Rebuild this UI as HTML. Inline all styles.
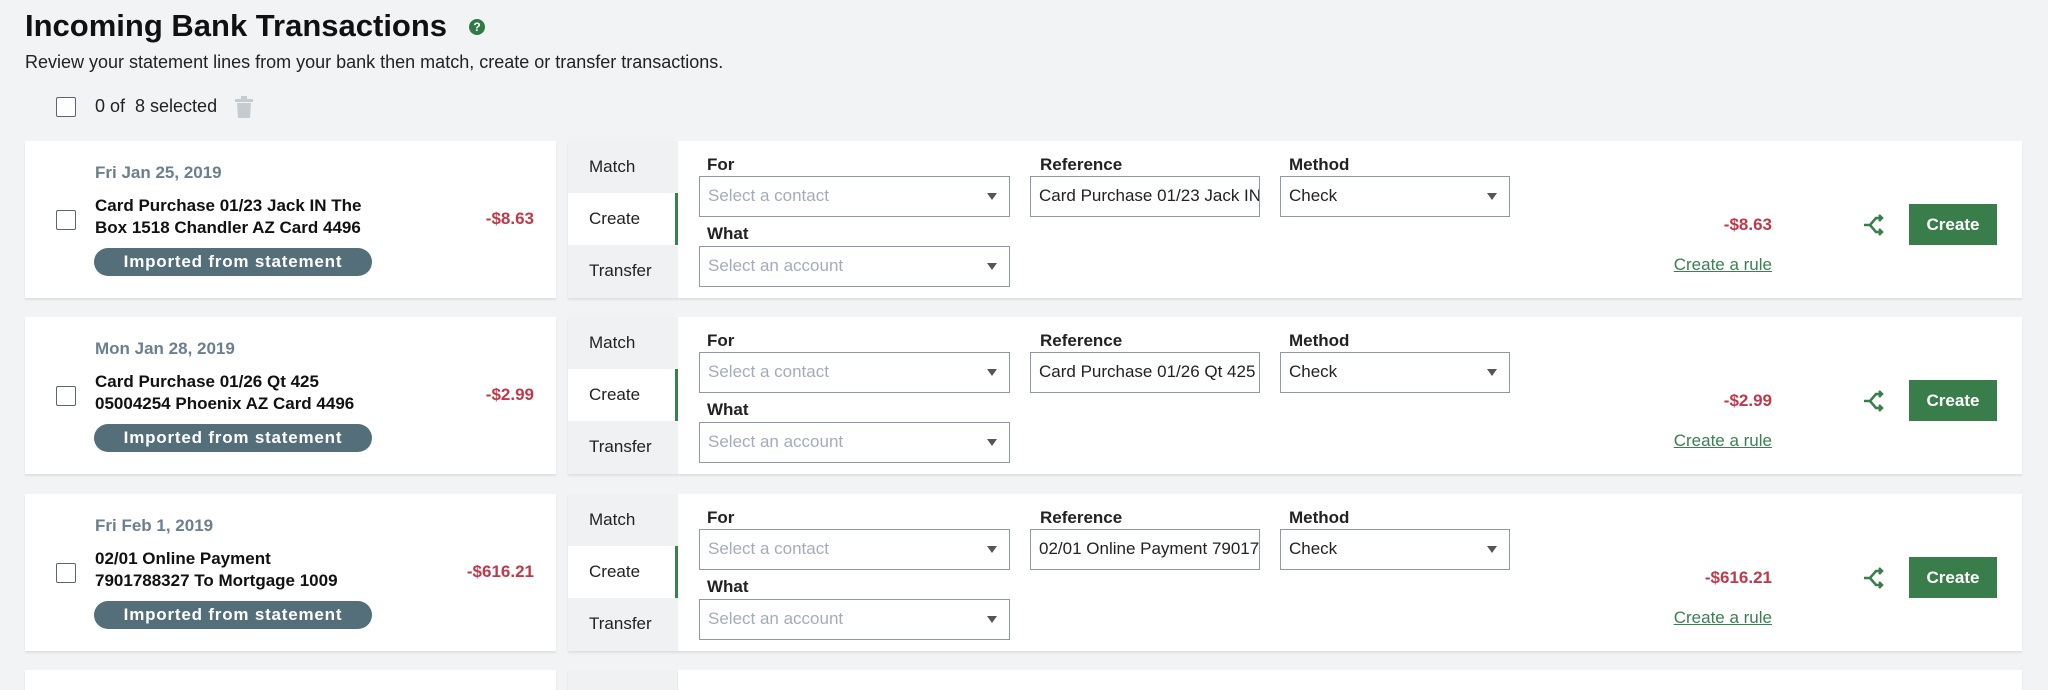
<!DOCTYPE html>
<html><head><style>
*{box-sizing:border-box;margin:0;padding:0}
body{width:2048px;height:677px;overflow:hidden;background:#f2f3f5;font-family:"Liberation Sans",sans-serif;color:#111;position:relative}
.a{position:absolute}
.cb{position:absolute;width:20px;height:20px;border:1.5px solid #5a6570;border-radius:2px;background:#fff}
.card{position:absolute;background:#fff;box-shadow:0 2px 2px rgba(0,0,0,.08)}
.tab{position:absolute;left:568px;width:110px;height:52px;background:#eff1f3;font-size:17px;color:#222;padding-left:21px;line-height:52px}
.tab.on{background:#fff;border-right:3px solid #3a8050}
.lbl{position:absolute;font-size:17px;font-weight:bold;color:#222}
.sel{position:absolute;height:41px;border:1.5px solid #8d99a6;background:#fff;font-size:17px;line-height:38px;padding-left:8px;color:#a3adb7}
.sel.v{color:#222}
.sel .ar{position:absolute;right:12px;top:16px;width:0;height:0;border-left:5px solid transparent;border-right:5px solid transparent;border-top:7px solid #555}
.red{color:#c0394b;font-weight:bold;font-size:17px}
.badge{position:absolute;left:94px;width:278px;height:28px;border-radius:14px;background:#546e7a;color:#fff;font-weight:bold;font-size:17px;text-align:center;line-height:28px;letter-spacing:.8px}
.btn{position:absolute;left:1909px;width:88px;height:41px;background:#397d4b;color:#fff;font-weight:bold;font-size:17px;text-align:center;line-height:41px}
.rule{position:absolute;right:276px;font-size:17px;color:#3a8050;text-decoration:underline}
</style></head><body>
<div class="a" style="left:25px;top:8px;font-size:31px;font-weight:bold;color:#111">Incoming Bank Transactions</div>
<div class="a" style="left:469px;top:19px;width:16px;height:16px;border-radius:50%;background:#2f7a45;color:#fff;font-size:12px;font-weight:bold;text-align:center;line-height:16px">?</div>
<div class="a" style="left:25px;top:52px;font-size:18px;color:#222">Review your statement lines from your bank then match, create or transfer transactions.</div>
<div class="cb" style="left:56px;top:97px"></div>
<div class="a" style="left:95px;top:96px;font-size:18px;color:#222">0 of &nbsp;8 selected</div>
<svg class="a" style="left:235px;top:96px" width="18" height="22" viewBox="0 0 18 22"><rect x="6" y="0" width="6" height="3" fill="#c4cbd1"/><rect x="0" y="3" width="18" height="3" fill="#c4cbd1"/><path d="M2 7h14l-1 15H3z" fill="#c4cbd1"/></svg>

<!-- rows -->
<div id="rows"></div>
<script></script>
<!-- Row 1 -->
<div class="card" style="left:25px;top:141px;width:531px;height:157px"></div>
<div class="a" style="left:95px;top:163px;font-size:17px;font-weight:bold;color:#6b7f8e">Fri Jan 25, 2019</div>
<div class="cb" style="left:56px;top:210px"></div>
<div class="a" style="left:95px;top:195px;font-size:17px;font-weight:bold;line-height:22px">Card Purchase 01/23 Jack IN The<br>Box 1518 Chandler AZ Card 4496</div>
<div class="a red" style="right:1514px;top:209px">-$8.63</div>
<div class="badge" style="top:248px">Imported from statement</div>
<div class="card" style="left:568px;top:141px;width:1454px;height:157px"></div>
<div class="tab" style="top:141px">Match</div><div class="tab on" style="top:193px">Create</div><div class="tab" style="top:245px;height:53px">Transfer</div>
<div class="lbl" style="left:707px;top:155px">For</div>
<div class="sel" style="left:699px;top:176px;width:311px">Select a contact<span class="ar"></span></div>
<div class="lbl" style="left:1040px;top:155px">Reference</div>
<div class="sel v" style="left:1030px;top:176px;width:230px;overflow:hidden;white-space:nowrap">Card Purchase 01/23 Jack IN</div>
<div class="lbl" style="left:1289px;top:155px">Method</div>
<div class="sel v" style="left:1280px;top:176px;width:230px">Check<span class="ar"></span></div>
<div class="lbl" style="left:707px;top:224px">What</div>
<div class="sel" style="left:699px;top:246px;width:311px">Select an account<span class="ar"></span></div>
<div class="a red" style="right:276px;top:215px">-$8.63</div>
<div class="rule" style="top:255px">Create a rule</div>
<svg class="a" style="left:1862px;top:214px" width="24" height="22" viewBox="0 0 24 22"><path d="M2 11h6l6-7h6M8 11l6 7h6M17 1l3 3-3 3M17 15l3 3-3 3" fill="none" stroke="#397d4b" stroke-width="2.5"/></svg>
<div class="btn" style="top:204px">Create</div>

<!-- Row 2 -->
<div class="card" style="left:25px;top:317px;width:531px;height:157px"></div>
<div class="a" style="left:95px;top:339px;font-size:17px;font-weight:bold;color:#6b7f8e">Mon Jan 28, 2019</div>
<div class="cb" style="left:56px;top:386px"></div>
<div class="a" style="left:95px;top:371px;font-size:17px;font-weight:bold;line-height:22px">Card Purchase 01/26 Qt 425<br>05004254 Phoenix AZ Card 4496</div>
<div class="a red" style="right:1514px;top:385px">-$2.99</div>
<div class="badge" style="top:424px">Imported from statement</div>
<div class="card" style="left:568px;top:317px;width:1454px;height:157px"></div>
<div class="tab" style="top:317px">Match</div><div class="tab on" style="top:369px">Create</div><div class="tab" style="top:421px;height:53px">Transfer</div>
<div class="lbl" style="left:707px;top:331px">For</div>
<div class="sel" style="left:699px;top:352px;width:311px">Select a contact<span class="ar"></span></div>
<div class="lbl" style="left:1040px;top:331px">Reference</div>
<div class="sel v" style="left:1030px;top:352px;width:230px;overflow:hidden;white-space:nowrap">Card Purchase 01/26 Qt 425</div>
<div class="lbl" style="left:1289px;top:331px">Method</div>
<div class="sel v" style="left:1280px;top:352px;width:230px">Check<span class="ar"></span></div>
<div class="lbl" style="left:707px;top:400px">What</div>
<div class="sel" style="left:699px;top:422px;width:311px">Select an account<span class="ar"></span></div>
<div class="a red" style="right:276px;top:391px">-$2.99</div>
<div class="rule" style="top:431px">Create a rule</div>
<svg class="a" style="left:1862px;top:390px" width="24" height="22" viewBox="0 0 24 22"><path d="M2 11h6l6-7h6M8 11l6 7h6M17 1l3 3-3 3M17 15l3 3-3 3" fill="none" stroke="#397d4b" stroke-width="2.5"/></svg>
<div class="btn" style="top:380px">Create</div>

<!-- Row 3 -->
<div class="card" style="left:25px;top:494px;width:531px;height:157px"></div>
<div class="a" style="left:95px;top:516px;font-size:17px;font-weight:bold;color:#6b7f8e">Fri Feb 1, 2019</div>
<div class="cb" style="left:56px;top:563px"></div>
<div class="a" style="left:95px;top:548px;font-size:17px;font-weight:bold;line-height:22px">02/01 Online Payment<br>7901788327 To Mortgage 1009</div>
<div class="a red" style="right:1514px;top:562px">-$616.21</div>
<div class="badge" style="top:601px">Imported from statement</div>
<div class="card" style="left:568px;top:494px;width:1454px;height:157px"></div>
<div class="tab" style="top:494px">Match</div><div class="tab on" style="top:546px">Create</div><div class="tab" style="top:598px;height:53px">Transfer</div>
<div class="lbl" style="left:707px;top:508px">For</div>
<div class="sel" style="left:699px;top:529px;width:311px">Select a contact<span class="ar"></span></div>
<div class="lbl" style="left:1040px;top:508px">Reference</div>
<div class="sel v" style="left:1030px;top:529px;width:230px;overflow:hidden;white-space:nowrap">02/01 Online Payment 7901788327</div>
<div class="lbl" style="left:1289px;top:508px">Method</div>
<div class="sel v" style="left:1280px;top:529px;width:230px">Check<span class="ar"></span></div>
<div class="lbl" style="left:707px;top:577px">What</div>
<div class="sel" style="left:699px;top:599px;width:311px">Select an account<span class="ar"></span></div>
<div class="a red" style="right:276px;top:568px">-$616.21</div>
<div class="rule" style="top:608px">Create a rule</div>
<svg class="a" style="left:1862px;top:567px" width="24" height="22" viewBox="0 0 24 22"><path d="M2 11h6l6-7h6M8 11l6 7h6M17 1l3 3-3 3M17 15l3 3-3 3" fill="none" stroke="#397d4b" stroke-width="2.5"/></svg>
<div class="btn" style="top:557px">Create</div>

<!-- Row 4 partial -->
<div class="card" style="left:25px;top:670px;width:531px;height:20px"></div>
<div class="card" style="left:568px;top:670px;width:110px;height:20px;background:#eff1f3"></div>
<div class="card" style="left:678px;top:670px;width:1344px;height:20px"></div>
</body></html>
